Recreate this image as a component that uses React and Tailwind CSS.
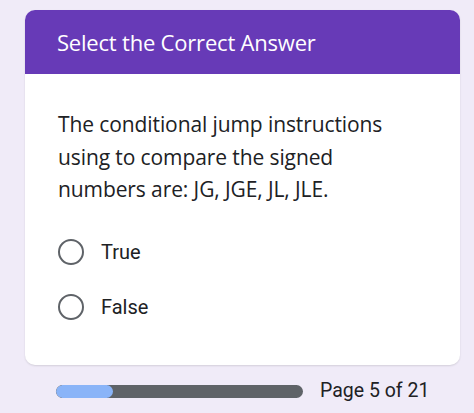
import React from "react";

const options = ["True", "False"];

function Radio() {
  return (
    <span className="block w-[26px] h-[26px] rounded-full border-[2.5px] border-[#5f6368] shrink-0" />
  );
}

export default function App() {
  const page = 5;
  const total = 21;
  return (
    <div className="w-[474px] h-[413px] overflow-hidden bg-[#f0ebf8] pt-[10px] pl-[25px] pr-[14px] font-['Roboto',sans-serif]">
      <div className="h-[355px] rounded-[10px] bg-white overflow-hidden shadow-[0_1px_2px_rgba(0,0,0,0.12)]">
        <div className="h-[64px] bg-[#673ab7] pl-[32px] flex items-center">
          <h1 className="text-white text-[22px] font-['Open_Sans',sans-serif] tracking-[-0.2px]">
            Select the Correct Answer
          </h1>
        </div>
        <div className="pl-[33px] pt-[34px]">
          <p className="text-[#202124] text-[21px] leading-[32.5px] font-['Open_Sans',sans-serif] tracking-[-0.1px]">
            The conditional jump instructions
            <br />
            using to compare the signed
            <br />
            numbers are: JG, JGE, JL, JLE.
          </p>
          <div className="mt-[33px] flex flex-col gap-[29px]">
            {options.map((o) => (
              <label key={o} className="flex items-center gap-[17px] h-[26px]">
                <Radio />
                <span className="text-[#202124] text-[20px]">{o}</span>
              </label>
            ))}
          </div>
        </div>
      </div>
      <div className="mt-[14px] flex items-center pl-[31px]">
        <div className="w-[247px] h-[13px] rounded-full bg-[#5f6368] overflow-hidden">
          <div
            className="h-full rounded-full bg-[#8ab4f8]"
            style={{ width: `${(57 / 247) * 100}%` }}
          />
        </div>
        <span className="ml-[17px] text-[#202124] text-[19.5px] leading-[24px]">
          Page {page} of {total}
        </span>
      </div>
    </div>
  );
}
